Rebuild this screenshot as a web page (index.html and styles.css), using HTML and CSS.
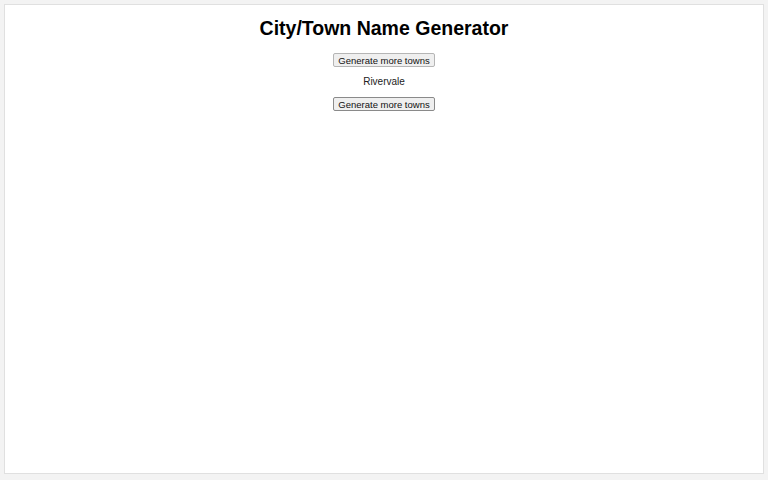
FILE: index.html
```html
<!DOCTYPE html>
<html lang="en">
<head>
    <meta charset="UTF-8">
    <meta name="viewport" content="width=device-width, initial-scale=1.0">
    <title>City/Town Name Generator</title>
    <link rel="stylesheet" href="styles.css">
</head>
<body>
    <div class="page">
        <h1>City/Town Name Generator</h1>
        <button class="gen-btn">Generate more towns</button>
        <div class="towns">
            <p>Rivervale</p>
        </div>
        <button class="gen-btn gen-btn-last">Generate more towns</button>
    </div>
</body>
</html>
```

FILE: styles.css
```css
html, body { margin: 0; background-color: #f3f3f3; }

body {
    padding: 4px;
    font-family: "Liberation Sans", Arial, sans-serif;
}

.page {
    height: 468px;
    background: #fff;
    border: 1px solid #e0e0e0;
    display: flex;
    flex-direction: column;
    align-items: center;
}

h1 {
    font-size: 19.5px;
    line-height: 22px;
    margin: 12px 0 14px;
}

.gen-btn {
    font-family: "Liberation Sans", Arial, sans-serif;
    font-size: 9.5px;
    color: #111;
    height: 14px;
    padding: 0 4px;
    background: #efefef;
    border: 1px solid #b5b5b5;
    border-radius: 2px;
}

.gen-btn-last {
    border-color: #8a8a8a;
}

.towns p {
    font-size: 10px;
    line-height: 11px;
    color: #222;
    margin: 9px 0 10px;
}
```
